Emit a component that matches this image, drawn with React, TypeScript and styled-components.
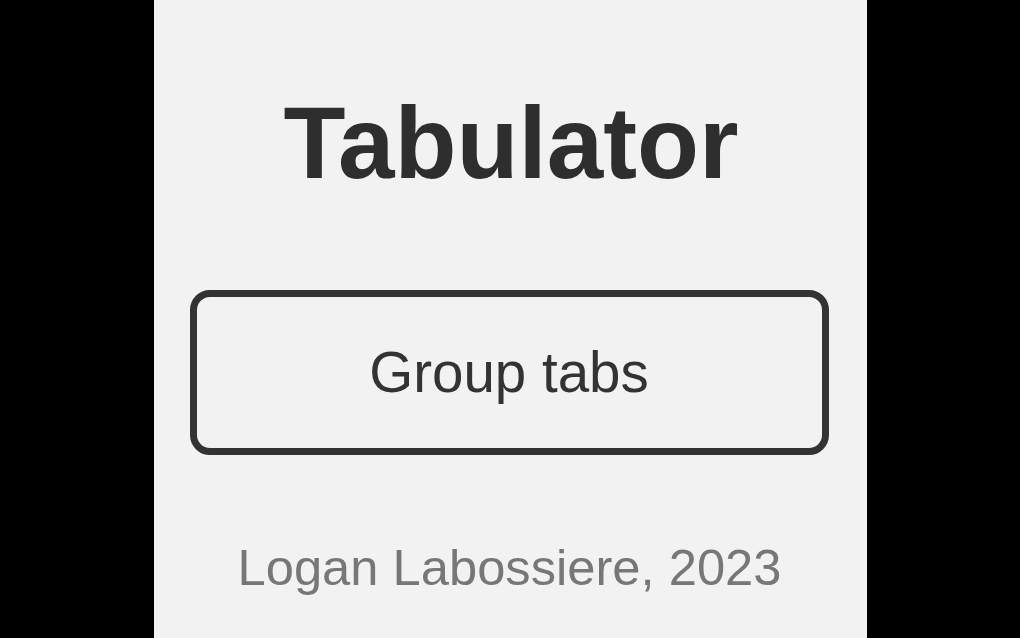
import React from "react";
import styled, { createGlobalStyle } from "styled-components";

const GlobalStyle = createGlobalStyle`
  html, body {
    margin: 0;
    padding: 0;
    background: #000;
  }
  body {
    font-family: "Liberation Sans", Arial, sans-serif;
  }
`;

const Stage = styled.div`
  display: flex;
  justify-content: center;
  min-height: 638px;
`;

const Popup = styled.main`
  box-sizing: border-box;
  width: 713px;
  height: 638px;
  background: #f2f2f2;
  padding: 93px 38px 0 36px;
  display: flex;
  flex-direction: column;
  align-items: center;
`;

const Title = styled.h1`
  margin: 0 0 0 4px;
  font-size: 101.5px;
  line-height: 100px;
  font-weight: 700;
  color: #2e2e2e;
`;

const ActionButton = styled.button`
  box-sizing: border-box;
  margin-top: 97px;
  width: 100%;
  height: 165px;
  border: 7px solid #333;
  border-radius: 20px;
  background: #f2f2f2;
  font-family: "Liberation Sans", Arial, sans-serif;
  font-size: 56.5px;
  color: #333;
  cursor: pointer;
`;

const Credit = styled.p`
  margin: 88px 0 0 1px;
  font-size: 50.7px;
  line-height: 50px;
  color: #777;
`;

export default function App() {
  return (
    <>
      <GlobalStyle />
      <Stage>
        <Popup>
          <Title>Tabulator</Title>
          <ActionButton type="button">Group tabs</ActionButton>
          <Credit>Logan Labossiere, 2023</Credit>
        </Popup>
      </Stage>
    </>
  );
}
